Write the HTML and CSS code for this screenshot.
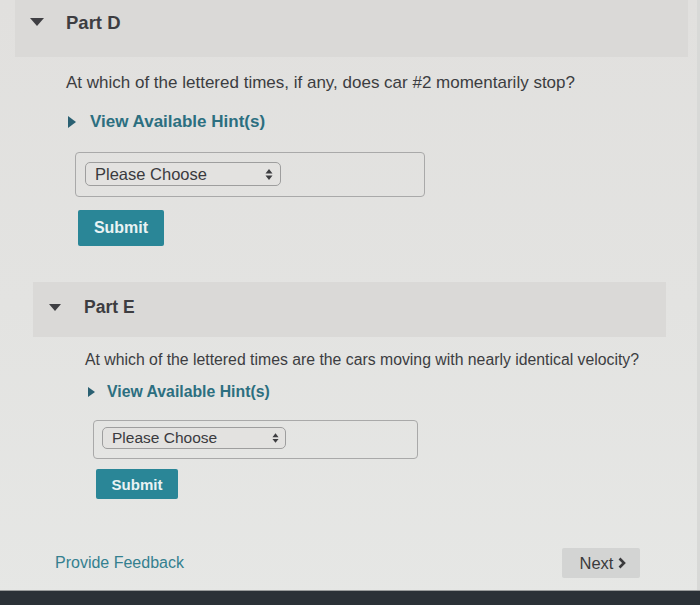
FILE: index.html
```html
<!DOCTYPE html>
<html lang="en">
<head>
<meta charset="utf-8">
<title>Part D / Part E</title>
<link rel="stylesheet" href="styles.css">
</head>
<body>
<div class="page">
  <section class="part part-d">
    <div class="part-head">
      <span class="caret"></span>
      <h2 class="part-title">Part D</h2>
    </div>
    <div class="part-body">
      <p class="question">At which of the lettered times, if any, does car #2 momentarily stop?</p>
      <div class="hint"><span class="hint-tri"></span>View Available Hint(s)</div>
      <div class="answer">
        <div class="select">
          <span>Please Choose</span>
          <svg class="updown" viewBox="0 0 8 12" width="8" height="13"><path d="M4 0.5 L7.5 5 L0.5 5 Z M4 11.5 L7.5 7 L0.5 7 Z" fill="#3d3d40"/></svg>
        </div>
      </div>
      <button class="submit">Submit</button>
    </div>
  </section>

  <section class="part part-e">
    <div class="part-head">
      <span class="caret"></span>
      <h2 class="part-title">Part E</h2>
    </div>
    <div class="part-body">
      <p class="question">At which of the lettered times are the cars moving with nearly identical velocity?</p>
      <div class="hint"><span class="hint-tri"></span>View Available Hint(s)</div>
      <div class="answer">
        <div class="select">
          <span>Please Choose</span>
          <svg class="updown" viewBox="0 0 8 12" width="7" height="12"><path d="M4 0.5 L7.5 5 L0.5 5 Z M4 11.5 L7.5 7 L0.5 7 Z" fill="#3d3d40"/></svg>
        </div>
      </div>
      <button class="submit">Submit</button>
    </div>
  </section>

  <footer class="footer">
    <a class="feedback">Provide Feedback</a>
    <button class="next">Next
      <svg viewBox="0 0 8 12" width="8" height="12"><path d="M1.5 1.5 L6 6 L1.5 10.5" fill="none" stroke="#3a3a3c" stroke-width="2.6"/></svg>
    </button>
  </footer>
</div>
<div class="taskbar"></div>
</body>
</html>
```
FILE: styles.css
```css
html, body {
  margin: 0;
  padding: 0;
}
body {
  width: 700px;
  height: 605px;
  overflow: hidden;
  font-family: "Liberation Sans", Arial, Helvetica, sans-serif;
  color: #3b3c40;
  background: linear-gradient(180deg, #e1e0de 0%, #e3e3e1 50%, #e6e7e5 100%);
}
.page {
  height: 590px;
  display: flex;
  flex-direction: column;
  border-right: 3px solid #d8d9d7;
  box-sizing: border-box;
}
.part-head {
  display: flex;
  align-items: center;
  background: #dad9d7;
  box-sizing: border-box;
}
.caret {
  width: 0;
  height: 0;
  border-left: 7px solid transparent;
  border-right: 7px solid transparent;
  border-top: 8px solid #3f3f43;
}
.part-title {
  margin: 0;
  font-weight: bold;
  color: #3d3d41;
}
.question {
  margin: 0;
  line-height: 20px;
  color: #3c3d41;
}
.hint {
  display: flex;
  align-items: center;
  font-weight: bold;
  color: #2c6f80;
  line-height: 20px;
}
.hint-tri {
  width: 0;
  height: 0;
  border-top: 6px solid transparent;
  border-bottom: 6px solid transparent;
  border-left: 8px solid #2a6072;
}
.answer {
  border: 1px solid #a9a9a9;
  border-radius: 4px;
  box-sizing: border-box;
}
.select {
  display: flex;
  align-items: center;
  justify-content: space-between;
  border: 1px solid #9e9e9e;
  border-radius: 5px;
  box-sizing: border-box;
  background: #e3e2e0;
  color: #3a3a3e;
}
.submit {
  display: block;
  border: none;
  border-radius: 2px;
  background: #2a8697;
  color: #e9f3f4;
  font-family: "Liberation Sans", Arial, Helvetica, sans-serif;
  font-weight: bold;
  padding: 0;
}

/* Part D */
.part-d .part-head {
  height: 57px;
  margin-left: 15px;
  width: 673px;
  padding-bottom: 11px;
}
.part-d .caret {
  margin-left: 15px;
  margin-right: 22px;
  margin-top: -2px;
}
.part-d .part-title {
  font-size: 18.5px;
}
.part-d .part-body {
  padding-left: 66px;
  padding-top: 16px;
}
.part-d .question {
  font-size: 17px;
}
.part-d .hint {
  margin-top: 19px;
  font-size: 17px;
}
.part-d .hint-tri {
  margin-left: 2px;
  margin-right: 14px;
}
.part-d .answer {
  margin-top: 20px;
  margin-left: 9px;
  width: 350px;
  height: 45px;
  padding: 9px 0 0 9px;
}
.part-d .select {
  width: 196px;
  height: 24px;
  padding: 0 7px 0 9px;
  font-size: 16.5px;
}
.part-d .submit {
  margin-top: 13px;
  margin-left: 12px;
  width: 86px;
  height: 36px;
  font-size: 16px;
}

/* Part E */
.part-e .part-head {
  margin-top: 36px;
  height: 55px;
  margin-left: 33px;
  width: 633px;
  padding-bottom: 4px;
}
.part-e .caret {
  margin-left: 16px;
  border-left-width: 6px;
  border-right-width: 6px;
  border-top-width: 7px;
  margin-right: 23px;
  margin-top: -1px;
}
.part-e .part-title {
  font-size: 17.5px;
}
.part-e .part-body {
  padding-left: 85px;
  padding-top: 13px;
}
.part-e .question {
  font-size: 15.8px;
}
.part-e .hint {
  margin-top: 12px;
  font-size: 15.8px;
}
.part-e .hint-tri {
  margin-left: 3px;
  margin-right: 12px;
  border-top-width: 5px;
  border-bottom-width: 5px;
  border-left-width: 7px;
}
.part-e .answer {
  margin-top: 18px;
  margin-left: 8px;
  width: 325px;
  height: 39px;
  padding: 6px 0 0 8px;
}
.part-e .select {
  width: 184px;
  height: 22px;
  padding: 0 6px 0 9px;
  font-size: 15.5px;
}
.part-e .submit {
  margin-top: 10px;
  margin-left: 11px;
  width: 82px;
  height: 30px;
  font-size: 15px;
}

/* Footer */
.footer {
  margin-top: auto;
  margin-bottom: 12px;
  display: flex;
  align-items: center;
  justify-content: space-between;
  padding-left: 55px;
  padding-right: 57px;
  height: 30px;
}
.feedback {
  color: #34808f;
  font-size: 16px;
}
.next {
  display: flex;
  align-items: center;
  gap: 5px;
  width: 78px;
  height: 30px;
  justify-content: center;
  border: none;
  border-radius: 2px;
  background: #d3d4d3;
  color: #3a3a3c;
  font-family: "Liberation Sans", Arial, Helvetica, sans-serif;
  font-size: 16.5px;
  padding: 0 0 0 4px;
}
.taskbar {
  height: 15px;
  background: #2b3137;
  border-top: 1px solid #9a9c9c;
}
```
